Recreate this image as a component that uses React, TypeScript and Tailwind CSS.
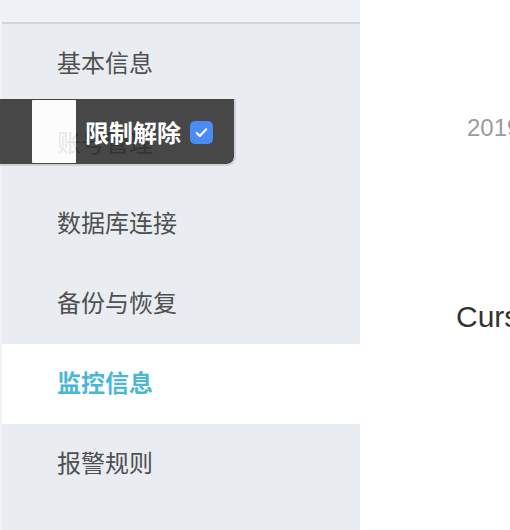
import React from 'react'

type MenuItem = {
  label: string;
  active?: boolean;
}

const menu: MenuItem[] = [
  { label: '基本信息' },
  { label: '账号管理' },
  { label: '数据库连接' },
  { label: '备份与恢复' },
  { label: '监控信息', active: true },
  { label: '报警规则' },
]

const cjk = { fontFamily: '"Noto Sans CJK SC", "Noto Sans", sans-serif' }

// floating bar drawn over the menu, the row below shows through a little
const UnlockBar = () => {
  return (
    <div className="absolute left-0 top-[99px] w-[236px] h-[67px] flex overflow-hidden border-r-2 border-b-2 border-[#cfd1d4] rounded-br-[9px]">
      <div className="w-[32px] bg-[rgba(48,48,48,0.88)]" />
      <div className="w-[44px] flex flex-col">
        <div className="h-[1px] bg-[rgba(48,48,48,0.88)]" />
        <div className="flex-1 rounded-[4px] bg-white/85" />
        <div className="h-[1px] bg-[rgba(48,48,48,0.88)]" />
      </div>
      <div className="flex-1 flex items-center pl-[9px] bg-[rgba(48,48,48,0.88)] rounded-br-[7px]">
        <span className="text-[24px] leading-none font-bold text-white" style={cjk}>限制解除</span>
        <span className="ml-[9px] mt-[2px] w-[23px] h-[23px] rounded-[5px] bg-[#4a8bf5] flex items-center justify-center">
          <svg width="15" height="15" viewBox="0 0 16 16" fill="none">
            <path d="M3 8.5l3.2 3.2L13 4.5" stroke="white" strokeWidth="2.2" strokeLinecap="round" strokeLinejoin="round" />
          </svg>
        </span>
      </div>
    </div>
  )
}

const App = () => {
  return (
    <div className="relative w-[510px] h-[530px] overflow-hidden bg-white flex">
      <aside className="w-[360px] shrink-0 flex flex-col bg-[#e9ecf0] border-l-2 border-[#f1f2f4]">
        <div className="h-[24px] shrink-0 bg-[#eef1f5] border-b-2 border-[#d3d4d6]" />
        {menu.map((item) => (
          <div
            key={item.label}
            className={
              item.active
                ? 'h-[80px] shrink-0 flex items-center pl-[55px] pb-[4px] bg-white text-[#4bb7d6] font-bold text-[24px]'
                : 'h-[80px] shrink-0 flex items-center pl-[55px] pb-[4px] text-[#505050] text-[24px]'
            }
            style={cjk}
          >
            {item.label}
          </div>
        ))}
      </aside>
      <main className="flex-1 flex flex-col whitespace-nowrap" style={{ fontFamily: '"Liberation Sans", Arial, sans-serif' }}>
        <div className="pt-[116px] pl-[107px] text-[24px] leading-[24px] text-[#9b9b9b]">2019-06-18 14:32:05</div>
        <div className="mt-[162px] pl-[96px] text-[30px] leading-[30px] text-[#333333]">Cursors</div>
      </main>
      <UnlockBar />
    </div>
  )
}

export default App
